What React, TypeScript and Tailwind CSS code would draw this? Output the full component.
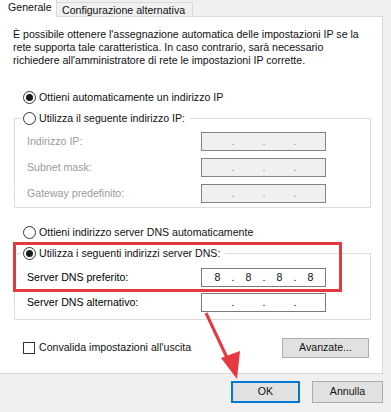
import React from 'react';

function Radio({ checked }: { checked?: boolean }) {
  return (
    <span className="w-[13px] h-[13px] rounded-full border border-[#333333] bg-white flex items-center justify-center shrink-0">
      {checked && <span className="w-[7px] h-[7px] rounded-full bg-[#1b1b1b]" />}
    </span>
  );
}

function IpField({ parts, disabled }: { parts: string[]; disabled?: boolean }) {
  const dot = disabled ? 'text-[#8c8c8c]' : 'text-black';
  return (
    <div
      className={`w-[125px] h-[19px] border flex items-center pl-[2px] ${
        disabled ? 'bg-[#f0f0f0] border-[#838383]' : 'bg-white border-[#7a7a7a]'
      }`}
    >
      {parts.map((p, i) => (
        <React.Fragment key={i}>
          {i > 0 && <span className={`w-[4px] text-center ${dot}`}>.</span>}
          <span className="w-[27px] text-center">{p}</span>
        </React.Fragment>
      ))}
    </div>
  );
}

function FieldRow({ label, disabled, parts }: { label: string; disabled?: boolean; parts: string[] }) {
  return (
    <div className="flex items-center h-[19px]">
      <span className={`ml-[5px] w-[174px] ${disabled ? 'text-[#9b9b9b]' : 'text-black'}`}>{label}</span>
      <IpField parts={parts} disabled={disabled} />
    </div>
  );
}

const empty = ['', '', '', ''];

export default function App() {
  return (
    <div className="w-[391px] h-[412px] bg-[#f0f0f0] relative overflow-hidden font-['Liberation_Sans',Arial,sans-serif] text-[10.6px] text-[#111111]">
      {/* Tabs */}
      <div className="flex items-start h-[16px]">
        <div className="relative z-10 h-[17px] w-[57px] bg-white border-r border-[#d9d9d9] pl-[8px] leading-[15px]">
          Generale
        </div>
        <div className="mt-[2px] h-[14px] w-[136px] bg-[#f0f0f0] border-t border-r border-[#d9d9d9] pl-[5px] leading-[14px] whitespace-nowrap">
          Configurazione alternativa
        </div>
      </div>

      {/* Panel */}
      <div className="w-[383px] h-[358px] bg-white border-t border-r border-b border-[#d9d9d9]">
        <p className="mt-[11px] ml-[13px] leading-[13px] whitespace-nowrap">
          È possibile ottenere l'assegnazione automatica delle impostazioni IP se la
          <br />
          rete supporta tale caratteristica. In caso contrario, sarà necessario
          <br />
          richiedere all'amministratore di rete le impostazioni IP corrette.
        </p>

        <div className="mt-[24px] ml-[23px] h-[13px] flex items-center gap-[3px]">
          <Radio checked />
          <span>Ottieni automaticamente un indirizzo IP</span>
        </div>

        <fieldset className="mt-[8px] ml-[14px] w-[357px] border border-[#dcdcdc] pl-[7px] pb-[4px]">
          <legend className="pl-[1px] pr-[5px]">
            <span className="h-[13px] flex items-center gap-[3px]">
              <Radio />
              <span>Utilizza il seguente indirizzo IP:</span>
            </span>
          </legend>
          <div className="mt-[7px] flex flex-col gap-[7px]">
            <FieldRow label="Indirizzo IP:" disabled parts={empty} />
            <FieldRow label="Subnet mask:" disabled parts={empty} />
            <FieldRow label="Gateway predefinito:" disabled parts={empty} />
          </div>
        </fieldset>

        <div className="mt-[18px] ml-[23px] h-[13px] flex items-center gap-[3px]">
          <Radio />
          <span>Ottieni indirizzo server DNS automaticamente</span>
        </div>

        <fieldset className="mt-[8px] ml-[14px] w-[357px] border border-[#dcdcdc] pl-[7px] pb-[7px]">
          <legend className="pl-[1px] pr-[5px]">
            <span className="h-[13px] flex items-center gap-[3px]">
              <Radio checked />
              <span>Utilizza i seguenti indirizzi server DNS:</span>
            </span>
          </legend>
          <div className="mt-[8px] flex flex-col gap-[6px]">
            <FieldRow label="Server DNS preferito:" parts={['8', '8', '8', '8']} />
            <FieldRow label="Server DNS alternativo:" parts={empty} />
          </div>
        </fieldset>

        <div className="mt-[18px] h-[20px] flex items-center justify-between pl-[23px] pr-[13px]">
          <div className="flex items-center gap-[4px]">
            <span className="w-[12px] h-[12px] border border-[#333333] bg-white" />
            <span>Convalida impostazioni all'uscita</span>
          </div>
          <button className="w-[87px] h-[20px] bg-[#e1e1e1] border border-[#adadad] text-center">
            Avanzate...
          </button>
        </div>
      </div>

      {/* Footer */}
      <div className="flex justify-end gap-[12px] pr-[8px] pt-[7px]">
        <button className="w-[69px] h-[22px] bg-[#e1e1e1] border-2 border-[#0078d7] text-center">OK</button>
        <button className="w-[71px] h-[22px] bg-[#e1e1e1] border border-[#adadad] text-center">Annulla</button>
      </div>

      {/* Annotation overlays */}
      <div className="absolute left-[13px] top-[242px] w-[329px] h-[50px] border-[3px] border-[#e5393f]" />
      <svg className="absolute left-0 top-0 pointer-events-none" width="391" height="412" viewBox="0 0 391 412">
        <line x1="206" y1="313" x2="229" y2="362" stroke="#e5393f" strokeWidth="3" />
        <polygon points="237,379 221,358 240,351" fill="#e5393f" />
      </svg>
    </div>
  );
}
